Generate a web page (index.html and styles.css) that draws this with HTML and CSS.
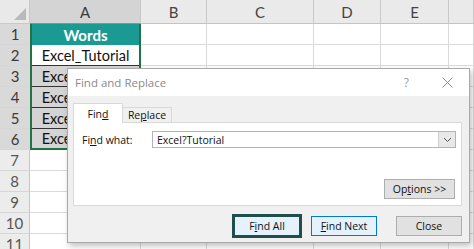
FILE: index.html
```html
<!DOCTYPE html>
<html lang="en">

<head>
    <meta charset="utf-8" />
    <title>Find and Replace</title>
    <link rel="stylesheet" href="styles.css">
</head>

<body>
  <div class="sheet">
    <div class="corner"><span class="tri"></span></div>
    <div class="colhead sel">A</div>
    <div class="colhead">B</div>
    <div class="colhead">C</div>
    <div class="colhead">D</div>
    <div class="colhead">E</div>
    <div class="colhead"></div>

    <div class="selblock">
      <div class="cell head">Words</div>
      <div class="cell plain">Excel_Tutorial</div>
      <div class="cell grey">Excel_Tutorial</div>
      <div class="cell grey">Excel_Tutorial</div>
      <div class="cell grey">Excel_Tutorial</div>
      <div class="cell grey last">Excel_Tutorial</div>
    </div>

    <div class="rowhead sel">1</div><div class="c"></div><div class="c"></div><div class="c"></div><div class="c"></div><div class="c"></div>
    <div class="rowhead sel">2</div><div class="c"></div><div class="c"></div><div class="c"></div><div class="c"></div><div class="c"></div>
    <div class="rowhead sel">3</div><div class="c"></div><div class="c"></div><div class="c"></div><div class="c"></div><div class="c"></div>
    <div class="rowhead sel">4</div><div class="c"></div><div class="c"></div><div class="c"></div><div class="c"></div><div class="c"></div>
    <div class="rowhead sel">5</div><div class="c"></div><div class="c"></div><div class="c"></div><div class="c"></div><div class="c"></div>
    <div class="rowhead sel">6</div><div class="c"></div><div class="c"></div><div class="c"></div><div class="c"></div><div class="c"></div>
    <div class="rowhead">7</div><div class="c"></div><div class="c"></div><div class="c"></div><div class="c"></div><div class="c"></div><div class="c"></div>
    <div class="rowhead">8</div><div class="c"></div><div class="c"></div><div class="c"></div><div class="c"></div><div class="c"></div><div class="c"></div>
    <div class="rowhead">9</div><div class="c"></div><div class="c"></div><div class="c"></div><div class="c"></div><div class="c"></div><div class="c"></div>
    <div class="rowhead">10</div><div class="c"></div><div class="c"></div><div class="c"></div><div class="c"></div><div class="c"></div><div class="c"></div>
    <div class="rowhead">11</div><div class="c"></div><div class="c"></div><div class="c"></div><div class="c"></div><div class="c"></div><div class="c"></div>
  </div>

  <div class="dialog">
    <div class="titlebar">
      <span class="title">Find and Replace</span>
      <span class="help">?</span>
      <svg class="close-x" width="11" height="11" viewBox="0 0 11 11">
        <path d="M0.5 0.5 L10.5 10.5 M10.5 0.5 L0.5 10.5" stroke="#8c8c8c" stroke-width="1" fill="none" />
      </svg>
    </div>
    <div class="dbody">
      <div class="tabs">
        <div class="tab active">Fin<u>d</u></div>
        <div class="tab">Re<u>p</u>lace</div>
      </div>
      <div class="panel">
        <div class="findrow">
          <label class="lbl">Fi<u>n</u>d what:</label>
          <div class="combo">
            <span class="value">Excel?Tutorial</span>
            <span class="drop">
              <svg width="9" height="6" viewBox="0 0 9 6">
                <path d="M1 1 L4.5 4.5 L8 1" stroke="#555" stroke-width="1" fill="none" />
              </svg>
            </span>
          </div>
        </div>
        <div class="optrow">
          <button class="btn opt">Op<u>t</u>ions &gt;&gt;</button>
        </div>
      </div>
      <div class="btnrow">
        <button class="btn findall">F<u>i</u>nd All</button>
        <button class="btn findnext"><u>F</u>ind Next</button>
        <button class="btn closebtn">Close</button>
      </div>
    </div>
  </div>
</body>

</html>
```

FILE: styles.css
```css
/*
  colours:
    header grey   #e9e9e9
    selected hdr  #d4d4d4
    grid line     #d9d9d9
    teal          #1b9a93
    select green  #217346
    dialog grey   #f0f0f0
 */
body {
  margin: 0;
  width: 474px;
  height: 249px;
  overflow: hidden;
  background-color: #ffffff;
  font-family: Lato, "Open Sans", sans-serif;
  position: relative;
}

.sheet {
  display: grid;
  grid-template-columns: 30px 111px 66px 107px 67px 68px 25px;
  grid-template-rows: 24px repeat(11, 21px);
}

.corner {
  background-color: #e9e9e9;
  border-right: 1px solid #c9c9c9;
  border-bottom: 1px solid #c9c9c9;
  position: relative;
}

.corner .tri {
  position: absolute;
  right: 3px;
  bottom: 3px;
  width: 0;
  height: 0;
  border-left: 12px solid transparent;
  border-bottom: 12px solid #b9b9b9;
}

.colhead {
  background-color: #eaeaea;
  border-right: 1px solid #c9c9c9;
  border-bottom: 1px solid #c4c4c4;
  color: #444;
  font-size: 15px;
  display: flex;
  align-items: center;
  justify-content: center;
}

.colhead.sel {
  background-color: #d4d4d4;
  border-bottom: 1px solid #8f8f8f;
  color: #3a3a3a;
}

.rowhead {
  background-color: #ececec;
  border-right: 1px solid #c6c6c6;
  border-bottom: 1px solid #d6d6d6;
  color: #555;
  font-size: 15px;
  display: flex;
  align-items: center;
  justify-content: center;
}

.rowhead.sel {
  background-color: #d9d9d9;
  border-right: none;
  color: #3a3a3a;
}

.c {
  border-right: 1px solid #dadada;
  border-bottom: 1px solid #dadada;
}

.selblock {
  grid-column: 2;
  grid-row: 2 / span 6;
  display: flex;
  flex-direction: column;
  border: 2px solid #217346;
  border-top: none;
}

.cell {
  height: 21px;
  box-sizing: border-box;
  font-size: 14.5px;
  display: flex;
  align-items: center;
  justify-content: center;
  white-space: nowrap;
  overflow: hidden;
}

.cell.head {
  background-color: #1b9a93;
  color: #ffffff;
  font-weight: bold;
  font-size: 15px;
}

.cell.plain {
  background-color: #ffffff;
  color: #111;
  border-bottom: 1px solid #333;
}

.cell.grey {
  background-color: #d4d4d4;
  color: #111;
  border-bottom: 1px solid #333;
}

.cell.last {
  height: 19px;
  border-bottom: none;
}

/* dialog over the sheet */
.dialog {
  position: absolute;
  left: 67px;
  top: 68px;
  width: 403px;
  height: 175px;
  box-sizing: border-box;
  border: 1px solid #a9a9a9;
  background-color: #f0f0f0;
  box-shadow: 2px 3px 6px rgba(0, 0, 0, 0.25);
  font-family: "Open Sans", "Noto Sans", sans-serif;
  font-size: 10.5px;
  color: #111;
  display: flex;
  flex-direction: column;
}

.titlebar {
  height: 27px;
  background-color: #ffffff;
  display: flex;
  align-items: center;
  padding-left: 7px;
  flex-shrink: 0;
}

.title {
  color: #8a8a8a;
  font-size: 11.5px;
  flex: 1;
}

.help {
  color: #9a9a9a;
  font-size: 12px;
  margin-right: 33px;
}

.close-x {
  margin-right: 16px;
}

.dbody {
  flex: 1;
  padding: 7px 7px 0 5px;
}

.tabs {
  display: flex;
  align-items: flex-end;
  height: 19px;
}

.tab {
  width: 49px;
  height: 15px;
  box-sizing: border-box;
  border: 1px solid #d9d9d9;
  border-left: none;
  border-bottom: none;
  background-color: #f0f0f0;
  display: flex;
  align-items: center;
  justify-content: center;
  position: relative;
}

.tab.active {
  width: 50px;
  height: 20px;
  border-left: 1px solid #d9d9d9;
  background-color: #ffffff;
  margin-bottom: -1px;
  z-index: 1;
}

.panel {
  height: 84px;
  box-sizing: border-box;
  background-color: #ffffff;
  border: 1px solid #d9d9d9;
  padding: 8px 5px 0 8px;
}

.findrow {
  display: flex;
  align-items: center;
}

.lbl {
  width: 70px;
}

.combo {
  flex: 1;
  height: 17px;
  box-sizing: border-box;
  border: 1px solid #b4b4b4;
  display: flex;
  align-items: center;
}

.combo .value {
  flex: 1;
  padding-left: 4px;
}

.combo .drop {
  width: 16px;
  height: 15px;
  background-color: #e8e8e8;
  border-left: 1px solid #d0d0d0;
  display: flex;
  align-items: center;
  justify-content: center;
}

.optrow {
  display: flex;
  justify-content: flex-end;
  margin-top: 31px;
  margin-right: 1px;
}

.btn {
  font-family: inherit;
  font-size: 10.5px;
  color: #111;
  height: 20px;
  box-sizing: border-box;
  border: 1px solid #adadad;
  background-color: #e1e1e1;
  padding: 0;
  margin: 0;
}

.btn.opt {
  width: 71px;
}

.btnrow {
  display: flex;
  justify-content: flex-end;
  margin-top: 10px;
}

.findall {
  width: 66px;
  background-color: #e5f1fb;
  border: 1px solid #1f4f4c;
  outline: 2px solid #1f4f4c;
  margin-right: 11px;
}

.findnext {
  width: 66px;
  background-color: #e5f1fb;
  border: 1px solid #0078d7;
  margin-right: 19px;
}

.closebtn {
  width: 66px;
}
```
